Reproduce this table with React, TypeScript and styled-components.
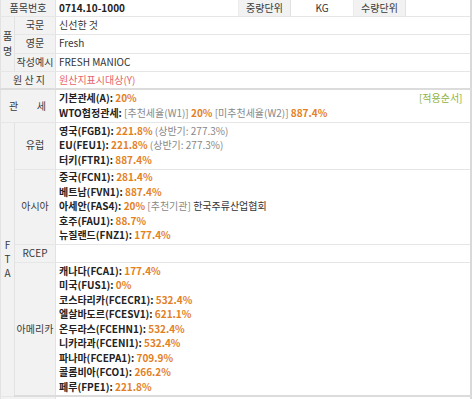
import { FC } from 'react'
import styled, { createGlobalStyle } from 'styled-components'

/**
 * Data
 */

interface Rate {
  name: string
  rate: string
  note?: string
  text?: string
}

const europe: Rate[] = [
  { name: '영국(FGB1):', rate: '221.8%', note: '(상반기: 277.3%)' },
  { name: 'EU(FEU1):', rate: '221.8%', note: '(상반기: 277.3%)' },
  { name: '터키(FTR1):', rate: '887.4%' }
]

const asia: Rate[] = [
  { name: '중국(FCN1):', rate: '281.4%' },
  { name: '베트남(FVN1):', rate: '887.4%' },
  { name: '아세안(FAS4):', rate: '20%', note: '[추천기관]', text: '한국주류산업협회' },
  { name: '호주(FAU1):', rate: '88.7%' },
  { name: '뉴질랜드(FNZ1):', rate: '177.4%' }
]

const america: Rate[] = [
  { name: '캐나다(FCA1):', rate: '177.4%' },
  { name: '미국(FUS1):', rate: '0%' },
  { name: '코스타리카(FCECR1):', rate: '532.4%' },
  { name: '엘살바도르(FCESV1):', rate: '621.1%' },
  { name: '온두라스(FCEHN1):', rate: '532.4%' },
  { name: '니카라과(FCENI1):', rate: '532.4%' },
  { name: '파나마(FCEPA1):', rate: '709.9%' },
  { name: '콜롬비아(FCO1):', rate: '266.2%' },
  { name: '페루(FPE1):', rate: '221.8%' }
]

/**
 * Styled Component
 */

const GlobalStyle = createGlobalStyle`
  html, body {
    margin: 0;
    padding: 0;
    background: #ffffff;
  }
  body {
    font-family: "Noto Sans CJK KR", "Noto Sans", sans-serif;
    font-size: 10px;
    color: #333333;
  }
`

const Table = styled.table`
  width: 470px;
  table-layout: fixed;
  border-collapse: collapse;
  border-right: 2px solid #d9d9d9;
  line-height: 14.5px;
`

const Row = styled.tr<{ $h: number; $end?: boolean }>`
  height: ${({ $h }) => $h}px;
  & > td,
  & > th {
    border-bottom: ${({ $end }) =>
      $end ? '2px solid #dcdcdc' : '1px solid #e6e6e6'};
  }
`

const Label = styled.th<{ $vertical?: boolean }>`
  background: #f2f2f2;
  border-left: 1px solid #e2e2e2;
  border-right: 1px solid #e2e2e2;
  font-weight: normal;
  color: #3a3a3a;
  text-align: center;
  vertical-align: middle;
  padding: 0;
  line-height: ${({ $vertical }) => ($vertical ? '14px' : '14.5px')};
  white-space: nowrap;
  overflow: hidden;
`

const Value = styled.td<{ $center?: boolean }>`
  background: #ffffff;
  border-left: 1px solid #ececec;
  border-right: 1px solid #ececec;
  padding: 0 3px;
  text-align: ${({ $center }) => ($center ? 'center' : 'left')};
  vertical-align: middle;
  white-space: nowrap;
  overflow: hidden;
`

const Spread = styled.div<{ $left: number; $right: number }>`
  display: flex;
  justify-content: space-between;
  padding: 0 ${({ $right }) => $right}px 0 ${({ $left }) => $left}px;
`

const Split = styled.div`
  display: flex;
  justify-content: space-between;
  align-items: flex-start;
`

const Line = styled.div`
  white-space: nowrap;
`

const Strong = styled.span`
  font-weight: bold;
  color: #222222;
`

const Orange = styled.span`
  font-weight: bold;
  color: #e3801f;
`

const Note = styled.span`
  color: #888888;
`

const Red = styled.span`
  color: #e8646a;
`

const Green = styled.span`
  color: #8fb23e;
  padding-right: 4px;
`

/**
 * Components
 */

const RateLines: FC<{ items: Rate[] }> = ({ items }) => (
  <>
    {items.map(item => (
      <Line key={item.name}>
        <Strong>{item.name}</Strong> <Orange>{item.rate}</Orange>
        {item.note && <> <Note>{item.note}</Note></>}
        {item.text && <> {item.text}</>}
      </Line>
    ))}
  </>
)

export default function App() {
  return (
    <>
      <GlobalStyle />
      <Table>
        <colgroup>
          <col style={{ width: 14 }} />
          <col style={{ width: 41 }} />
          <col style={{ width: 183 }} />
          <col style={{ width: 52 }} />
          <col style={{ width: 63 }} />
          <col style={{ width: 52 }} />
          <col style={{ width: 65 }} />
        </colgroup>
        <tbody>
          <Row $h={16}>
            <Label colSpan={2}>품목번호</Label>
            <Value>
              <Strong>0714.10-1000</Strong>
            </Value>
            <Label>중량단위</Label>
            <Value $center>KG</Value>
            <Label>수량단위</Label>
            <Value />
          </Row>
          <Row $h={18}>
            <Label rowSpan={3}>
              품<br />명
            </Label>
            <Label>국문</Label>
            <Value colSpan={5}>신선한 것</Value>
          </Row>
          <Row $h={19}>
            <Label>영문</Label>
            <Value colSpan={5}>Fresh</Value>
          </Row>
          <Row $h={18}>
            <Label>작성예시</Label>
            <Value colSpan={5}>FRESH MANIOC</Value>
          </Row>
          <Row $h={18} $end>
            <Label colSpan={2}>
              <Spread $left={12} $right={10}>
                <span>원</span>
                <span>산</span>
                <span>지</span>
              </Spread>
            </Label>
            <Value colSpan={5}>
              <Red>원산지표시대상(Y)</Red>
            </Value>
          </Row>
          <Row $h={33}>
            <Label colSpan={2}>
              <Spread $left={8} $right={9}>
                <span>관</span>
                <span>세</span>
              </Spread>
            </Label>
            <Value colSpan={5}>
              <Split>
                <div>
                  <Line>
                    <Strong>기본관세(A):</Strong> <Orange>20%</Orange>
                  </Line>
                  <Line>
                    <Strong>WTO협정관세:</Strong> <Note>[추천세율(W1)]</Note>{' '}
                    <Orange>20%</Orange> <Note>[미추천세율(W2)]</Note>{' '}
                    <Orange>887.4%</Orange>
                  </Line>
                </div>
                <Green>[적용순서]</Green>
              </Split>
            </Value>
          </Row>
          <Row $h={47}>
            <Label rowSpan={4} $vertical>
              F<br />T<br />A
            </Label>
            <Label>유럽</Label>
            <Value colSpan={5}>
              <RateLines items={europe} />
            </Value>
          </Row>
          <Row $h={75}>
            <Label>아시아</Label>
            <Value colSpan={5}>
              <RateLines items={asia} />
            </Value>
          </Row>
          <Row $h={18}>
            <Label>RCEP</Label>
            <Value colSpan={5} />
          </Row>
          <Row $h={134} $end>
            <Label>아메리카</Label>
            <Value colSpan={5}>
              <RateLines items={america} />
            </Value>
          </Row>
          <Row $h={18}>
            <Label colSpan={2} />
            <Value colSpan={5} />
          </Row>
        </tbody>
      </Table>
    </>
  )
}
